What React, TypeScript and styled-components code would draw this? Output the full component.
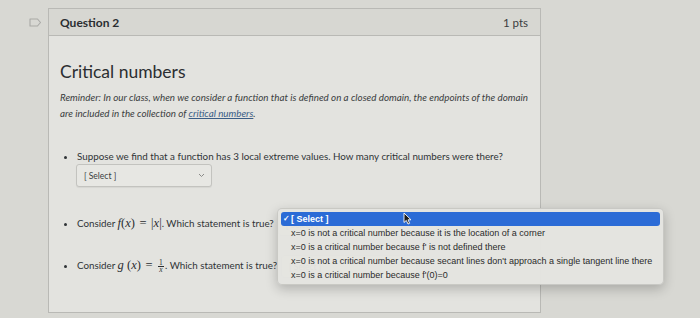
import React from 'react';
import styled, { createGlobalStyle } from 'styled-components';

const GlobalStyle = createGlobalStyle`
  html, body {
    margin: 0;
    padding: 0;
  }
  body {
    width: 700px;
    height: 318px;
    overflow: hidden;
    background: #d8d8d3;
    font-family: Lato, "Open Sans", sans-serif;
    color: #2f3336;
  }
`;

const options = [
  'x=0 is not a critical number because it is the location of a corner',
  "x=0 is a critical number because f' is not defined there",
  "x=0 is not a critical number because secant lines don't approach a single tangent line there",
  "x=0 is a critical number because f'(0)=0",
];

const FlagIcon = () => (
  <svg width="13" height="9" viewBox="0 0 13 9">
    <path d="M1 1 H8.5 L11.5 4.5 L8.5 8 H1 Z" fill="none" stroke="#a9a9a6" strokeWidth="1.1" strokeLinejoin="round" />
  </svg>
);

const Chevron = () => (
  <svg width="7" height="5" viewBox="0 0 7 5">
    <path d="M1 1 L3.5 3.5 L6 1" fill="none" stroke="#8a8a88" strokeWidth="1" />
  </svg>
);

const Pointer = () => (
  <svg width="9" height="13" viewBox="0 0 9 13">
    <path d="M1 1 L1 10.5 L3.3 8.4 L5 12 L6.6 11.3 L5 7.8 L8 7.8 Z" fill="#1b1b1b" stroke="#fff" strokeWidth="0.9" strokeLinejoin="round" />
  </svg>
);

const Fraction = () => (
  <Frac>
    <span>1</span>
    <FracLine />
    <MathVar>x</MathVar>
  </Frac>
);

const App = () => {
  return (
    <Page>
      <GlobalStyle />
      <Gutter>
        <FlagIcon />
      </Gutter>
      <Card>
        <Header>
          <Title>Question 2</Title>
          <Points>1 pts</Points>
        </Header>
        <Body>
          <Heading>Critical numbers</Heading>
          <Reminder>
            Reminder: In our class, when we consider a function that is defined on a closed domain, the endpoints of the domain
            are included in the collection of <Link>critical numbers</Link>.
          </Reminder>
          <List>
            <Item>
              Suppose we find that a function has 3 local extreme values. How many critical numbers were there?
              <Select $block>
                <span>[ Select ]</span>
                <Chevron />
              </Select>
            </Item>
            <Item $gap={26}>
              Consider{' '}
              <Math>
                <MathVar>f</MathVar>(<MathVar>x</MathVar>)<Rel>=</Rel>|<MathVar>x</MathVar>|
              </Math>
              . Which statement is true?
              <Select>
                <span>[ Select ]</span>
                <Chevron />
              </Select>
            </Item>
            <Item $gap={19}>
              Consider{' '}
              <Math>
                <MathVar>g</MathVar> (<MathVar>x</MathVar>)<Rel>=</Rel>
                <Fraction />
              </Math>
              . Which statement is true?
              <Select>
                <span>[ Select ]</span>
                <Chevron />
              </Select>
            </Item>
          </List>
        </Body>
      </Card>
      <Popup>
        <Option $active>
          <Check>✓</Check>[ Select ]
        </Option>
        {options.map((o) => (
          <Option key={o}>{o}</Option>
        ))}
        <Cursor>
          <Pointer />
        </Cursor>
      </Popup>
    </Page>
  );
};

const Page = styled.div`
  position: relative;
  display: flex;
  align-items: flex-start;
  padding-top: 8px;
  height: 318px;
  box-sizing: border-box;
`;

const Gutter = styled.div`
  width: 48px;
  box-sizing: border-box;
  padding: 10px 0 0 29px;
  display: flex;
`;

const Card = styled.div`
  width: 493px;
  height: 305px;
  box-sizing: border-box;
  border: 1px solid #b9b9b5;
  background: #e3e3df;
`;

const Header = styled.div`
  height: 27px;
  box-sizing: border-box;
  display: flex;
  align-items: center;
  justify-content: space-between;
  padding: 0 12px 0 11px;
  background: #d7d7d2;
  border-bottom: 1px solid #b9b9b5;
`;

const Title = styled.div`
  font-size: 12px;
  font-weight: 700;
  color: #2b2e31;
`;

const Points = styled.div`
  font-size: 11.5px;
  color: #3a3d40;
`;

const Body = styled.div`
  padding: 25px 12px 0 11px;
`;

const Heading = styled.h2`
  margin: 0;
  font-size: 17.5px;
  font-weight: 400;
  line-height: 22px;
  color: #2b2e31;
`;

const Reminder = styled.p`
  margin: 7px 0 0;
  font-size: 9.8px;
  font-style: italic;
  line-height: 15.5px;
  color: #3a3d40;
`;

const Link = styled.span`
  color: #3a5d86;
  text-decoration: underline;
`;

const List = styled.ul`
  margin: 28px 0 0;
  padding-left: 17px;
  list-style: disc;
`;

const Item = styled.li<{ $gap?: number }>`
  margin-top: ${(p) => p.$gap ?? 0}px;
  font-size: 9.8px;
  line-height: 14px;
  color: #2f3336;
`;

const Math = styled.span`
  font-family: "Liberation Serif", "DejaVu Serif", serif;
  font-size: 12.5px;
  color: #2b2e31;
`;

const MathVar = styled.i`
  font-style: italic;
`;

const Rel = styled.span`
  margin: 0 4.5px;
`;

const Frac = styled.span`
  display: inline-flex;
  flex-direction: column;
  align-items: center;
  vertical-align: middle;
  font-size: 7.5px;
  line-height: 7px;
  margin: 0 1px;
`;

const FracLine = styled.span`
  width: 6px;
  height: 0.6px;
  background: #2b2e31;
`;

const Select = styled.div<{ $block?: boolean }>`
  display: ${(p) => (p.$block ? 'flex' : 'inline-flex')};
  vertical-align: middle;
  align-items: center;
  justify-content: space-between;
  box-sizing: border-box;
  width: 136px;
  height: 23px;
  margin: ${(p) => (p.$block ? '1px 0 0 -1px' : '0 0 0 4px')};
  padding: 0 6px 0 7px;
  border: 1px solid #c3c3bf;
  border-radius: 3px;
  background: #e7e7e3;
  box-shadow: 0 1px 1px rgba(0, 0, 0, 0.06);
  font-size: 8.5px;
  color: #3a3d40;
`;

const Popup = styled.div`
  position: absolute;
  left: 277px;
  top: 208px;
  width: 387px;
  box-sizing: border-box;
  padding: 3px 3px 2px;
  background: rgba(228, 228, 224, 0.97);
  border: 1px solid rgba(0, 0, 0, 0.12);
  border-radius: 5px;
  box-shadow: 0 4px 12px rgba(0, 0, 0, 0.22);
  font-family: "Liberation Sans", Arial, sans-serif;
`;

const Option = styled.div<{ $active?: boolean }>`
  position: relative;
  height: 14px;
  line-height: 14px;
  padding-left: 10px;
  border-radius: 3px;
  white-space: nowrap;
  font-size: 9px;
  color: ${(p) => (p.$active ? '#ffffff' : '#2a2a2a')};
  background: ${(p) => (p.$active ? '#2b6bd6' : 'transparent')};
  font-weight: ${(p) => (p.$active ? 700 : 400)};
`;

const Check = styled.span`
  position: absolute;
  left: 2px;
  top: 0;
  font-size: 8px;
`;

const Cursor = styled.div`
  position: absolute;
  left: 125px;
  top: 3px;
  display: flex;
`;

export default App;
